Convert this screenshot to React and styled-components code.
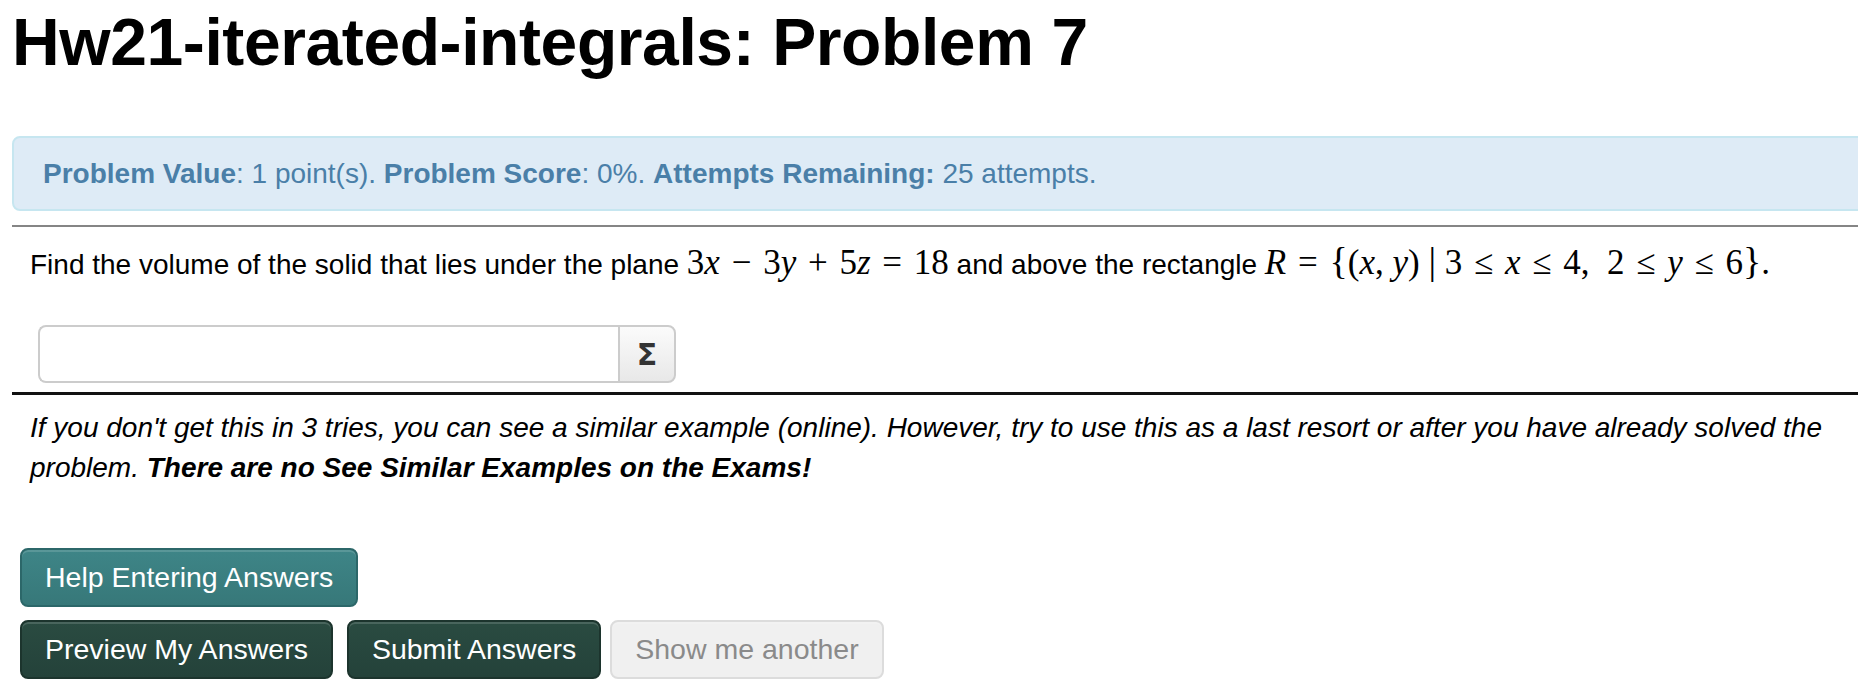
import styled, { createGlobalStyle } from "styled-components";

const Global = createGlobalStyle`
    html, body {
        margin: 0;
        padding: 0;
        background: #fff;
        overflow-x: hidden;
    }
    body {
        font-family: "Liberation Sans", Arial, sans-serif;
        font-size: 28px;
        line-height: 40px;
        color: #000;
    }
`

export default function App(){
    return(
        <Page>
            <Global/>
            <Title>Hw21-iterated-integrals: Problem 7</Title>
            <InfoBox>
                <b>Problem Value</b>: 1 point(s). <b>Problem Score</b>: 0%. <b>Attempts Remaining:</b> 25 attempts.
            </InfoBox>
            <ProblemArea>
                <Statement>
                    Find the volume of the solid that lies under the plane{" "}
                    <Math>
                        3<V>x</V> <Op>−</Op> 3<V>y</V> <Op>+</Op> 5<V>z</V> <Op>=</Op> 18
                    </Math>{" "}
                    and above the rectangle{" "}
                    <Math>
                        <V>R</V> <Op>=</Op> <Brace>{"{"}</Brace>(<V>x</V>, <V>y</V>) <Brace>|</Brace> 3 <Op>≤</Op> <V>x</V> <Op>≤</Op> 4,&nbsp; 2 <Op>≤</Op> <V>y</V> <Op>≤</Op> 6<Brace>{"}"}</Brace>.
                    </Math>
                </Statement>
                <AnswerRow>
                    <AnswerInput type="text"/>
                    <SigmaButton>Σ</SigmaButton>
                </AnswerRow>
            </ProblemArea>
            <Hint>
                <p>
                    If you don't get this in 3 tries, you can see a similar example (online). However, try to use this as a last resort or after you have already solved the problem. <b>There are no See Similar Examples on the Exams!</b>
                </p>
            </Hint>
            <Buttons>
                <ButtonRow>
                    <Btn $kind="help">Help Entering Answers</Btn>
                </ButtonRow>
                <ButtonRow>
                    <Btn $kind="dark">Preview My Answers</Btn>
                    <Btn $kind="dark">Submit Answers</Btn>
                    <Btn $kind="off" $pull>Show me another</Btn>
                </ButtonRow>
            </Buttons>
        </Page>
    )
}

const Page = styled.div`
    padding: 0 0 0 12px;
    width: calc(100% + 40px);
    box-sizing: border-box;
`

const Title = styled.h1`
    margin: 0;
    padding-top: 2px;
    font-size: 66px;
    line-height: 80px;
    font-weight: bold;
    letter-spacing: -0.4px;
    height: 136px;
    box-sizing: border-box;
`

const InfoBox = styled.div`
    background: #deebf6;
    border: 2px solid #c6e6f0;
    border-radius: 8px;
    color: #4a7fa8;
    padding: 16px 70px 15px 29px;
    margin-bottom: 14px;
    b{
        font-weight: bold;
        color: #4a7fa8;
    }
`

const ProblemArea = styled.div`
    border-top: 2px solid #858585;
    border-bottom: 3px solid #111;
    padding: 14px 0 9px 18px;
`

const Statement = styled.p`
    margin: 0 0 40px 0;
`

const Math = styled.span`
    font-family: "Liberation Serif", "DejaVu Serif", serif;
    font-size: 35px;
`

const V = styled.i`
    font-style: italic;
`

const Op = styled.span`
    margin: 0 3px;
`

const Brace = styled.span`
    font-size: 38px;
`

const AnswerRow = styled.div`
    display: flex;
    padding-left: 8px;
`

const AnswerInput = styled.input`
    width: 580px;
    height: 58px;
    box-sizing: border-box;
    border: 2px solid #cccccc;
    border-right: none;
    border-radius: 8px 0 0 8px;
    font-size: 28px;
    padding: 8px 12px;
    outline: none;
`

const SigmaButton = styled.button`
    width: 58px;
    height: 58px;
    box-sizing: border-box;
    border: 2px solid #cccccc;
    border-radius: 0 8px 8px 0;
    background: linear-gradient(#fbfbfb, #e8e8e8);
    font-family: "DejaVu Sans", sans-serif;
    font-weight: bold;
    font-size: 30px;
    color: #333;
    padding: 0;
`

const Hint = styled.div`
    padding: 13px 0 0 18px;
    p{
        margin: 0;
        font-style: italic;
        width: 1830px;
    }
    b{
        font-weight: bold;
    }
`

const Buttons = styled.div`
    margin-top: 60px;
    padding-left: 8px;
    display: flex;
    flex-direction: column;
    gap: 13px;
`

const ButtonRow = styled.div`
    display: flex;
    gap: 14px;
`

const colors = {
    help: { bg: "linear-gradient(#3e8587, #377879)", border: "#2c6769", color: "#fff" },
    dark: { bg: "linear-gradient(#2a4b41, #24423a)", border: "#1c342d", color: "#fff" },
    off: { bg: "#f0f0f0", border: "#dcdcdc", color: "#8a8a8a" },
}

const Btn = styled.button`
    font-family: "Liberation Sans", Arial, sans-serif;
    font-size: 28.5px;
    line-height: 40px;
    padding: 7px 23px 8px 23px;
    margin-left: ${p => p.$pull ? "-5px" : "0"};
    border-radius: 8px;
    background: ${p => colors[p.$kind].bg};
    border: 2px solid ${p => colors[p.$kind].border};
    color: ${p => colors[p.$kind].color};
    box-shadow: inset 0 2px 0 rgba(255,255,255,0.15);
    cursor: pointer;
`
